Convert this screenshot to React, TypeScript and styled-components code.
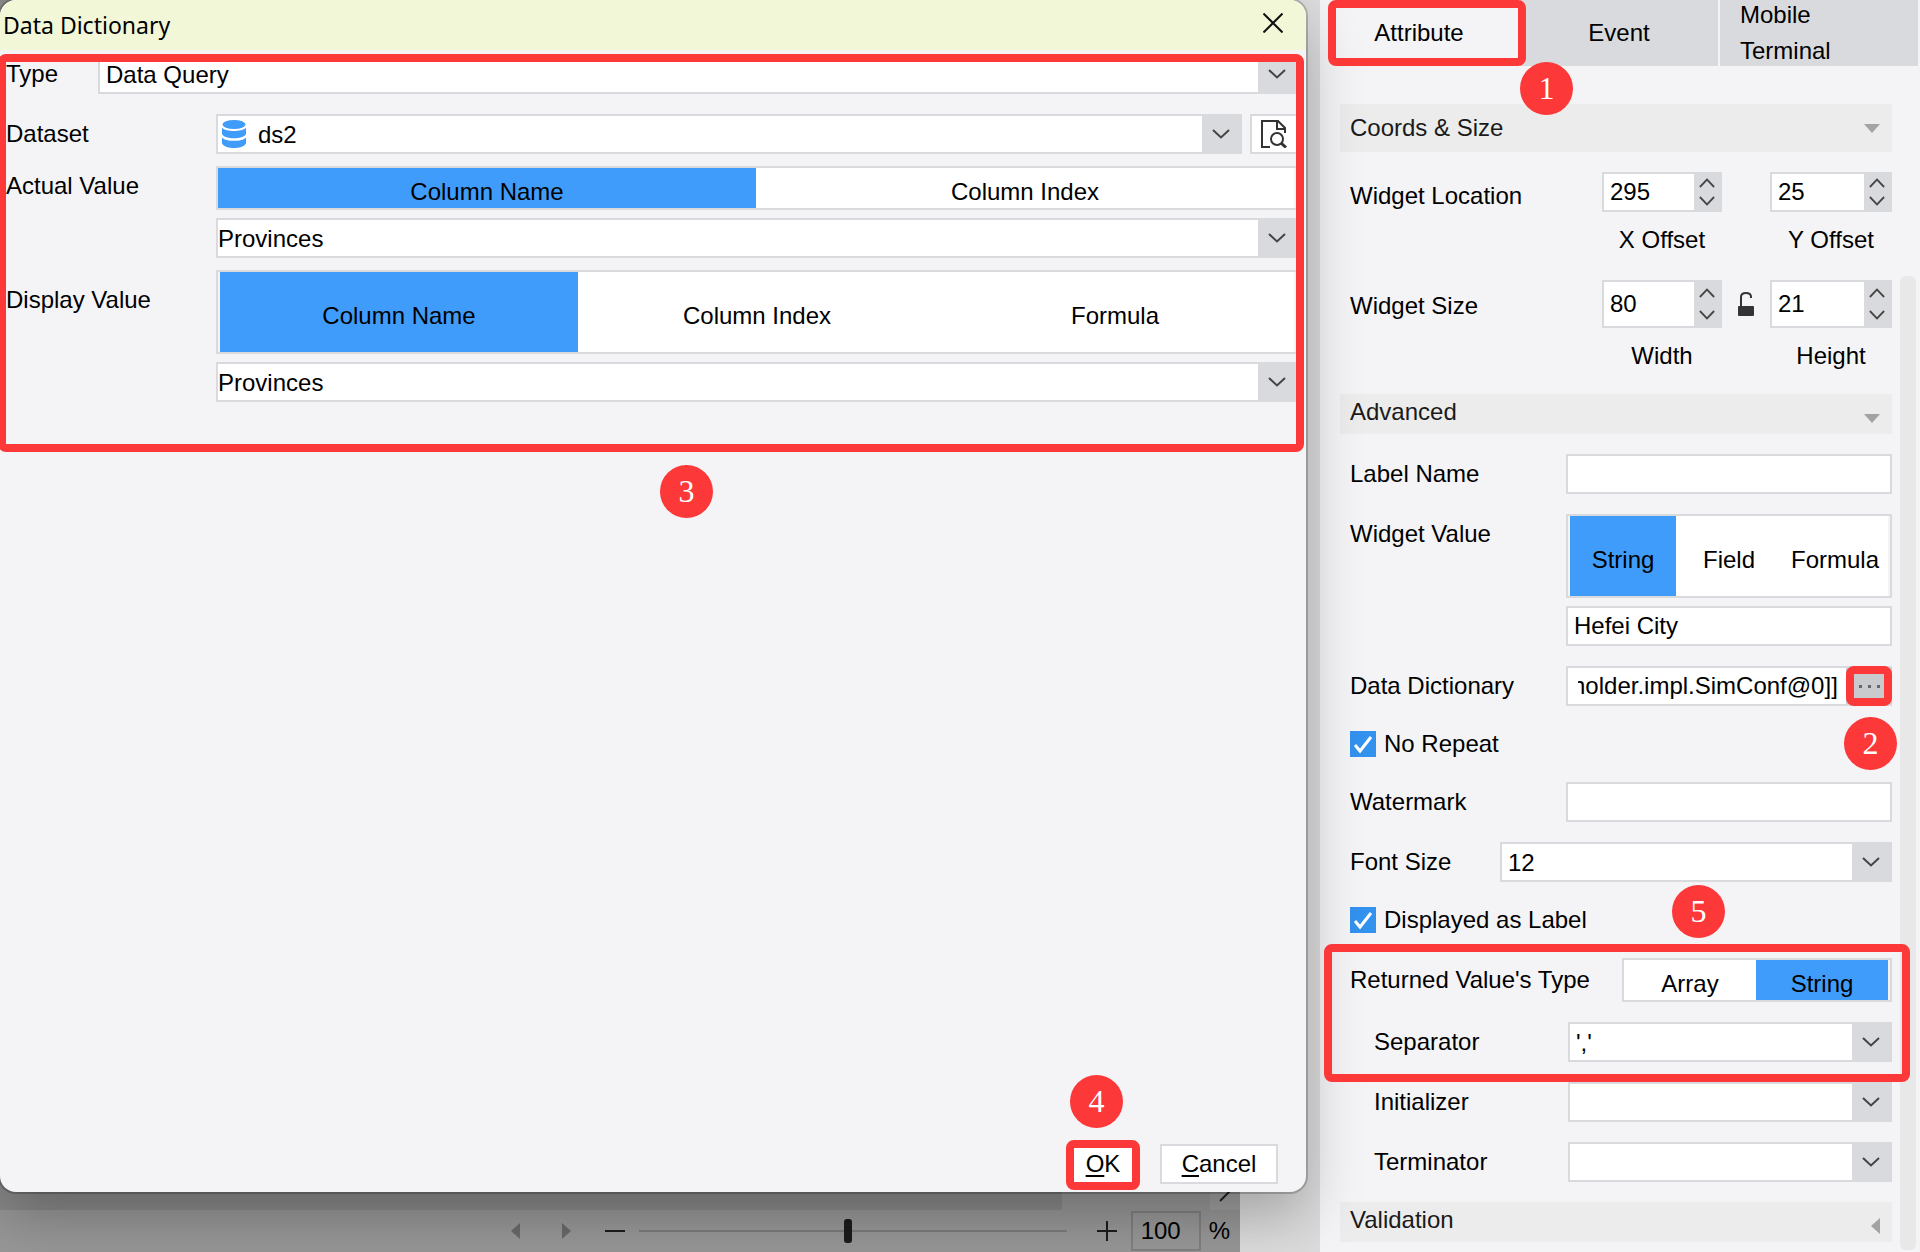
import React, { useEffect, useId, useRef, useState } from "react";
import styled, { createGlobalStyle } from "styled-components";

const line = "#d9dadd";
const surface = "#f4f4f7";
const blue = "#409cfa";
const red = "#fc3838";

const GlobalStyle = createGlobalStyle`
  *, *::before, *::after { box-sizing: border-box; }
  body { margin: 0; background: #dcdcdc; }
  body, button, input, select {
    font-family: "Liberation Sans", Arial, sans-serif;
    font-size: 24px;
    color: #000;
  }
  button { padding: 0; border: 0; background: none; cursor: pointer; }
`;

/* ---------- shell ---------- */

const Page = styled.div`
  position: relative;
  display: flex;
  min-height: 100vh;
  overflow: hidden;
`;

const Workspace = styled.main`
  flex: 1;
  display: flex;
  flex-direction: column;
  margin-right: 80px;
  background: #979797;
`;

const Canvas = styled.div`
  flex: 1;
  display: flex;
  justify-content: flex-end;
  align-items: flex-end;
  background: #898989;
`;

const CanvasEdge = styled.div`
  align-self: stretch;
  display: flex;
  justify-content: flex-end;
  align-items: flex-end;
  width: 178px;
  background: #979797;
`;

const ScrollCorner = styled.div`
  display: flex;
  justify-content: center;
  width: 30px;
  height: 20px;
  background: #9f9f9f;
`;

const StatusBar = styled.footer`
  display: flex;
  justify-content: flex-end;
  align-items: center;
  gap: 14px;
  height: 42px;
  padding-right: 10px;
`;

const PageArrows = styled.div`
  display: flex;
  gap: 42px;
  margin-right: 20px;
`;

const StatusButton = styled.button`
  display: flex;
`;

const ZoomSlider = styled.input`
  appearance: none;
  width: 428px;
  height: 24px;
  margin: 0 16px 0 0;
  background: linear-gradient(#7c7c7c, #7c7c7c) center / 100% 2px no-repeat;
  &::-webkit-slider-thumb {
    appearance: none;
    width: 8px;
    height: 24px;
    border-radius: 3px;
    background: #1c1c1c;
  }
`;

const ZoomValue = styled.input`
  width: 70px;
  height: 40px;
  padding: 0 0 0 8px;
  border: 2px solid #808080;
  background: transparent;
`;

const Percent = styled.div`
  display: flex;
  align-items: center;
  gap: 8px;
`;

/* ---------- callouts ---------- */

const Target = styled.div`
  position: relative;
  display: grid;
`;

const Highlight = styled.div<{ $inset: string }>`
  position: absolute;
  z-index: 3;
  inset: ${(p) => p.$inset};
  border: 8px solid ${red};
  border-radius: 8px;
  pointer-events: none;
`;

const Badge = styled.div<{ $left: string; $top: string }>`
  position: absolute;
  z-index: 3;
  left: ${(p) => p.$left};
  top: ${(p) => p.$top};
  width: 53px;
  height: 53px;
  border-radius: 50%;
  background: ${red};
  color: #fff;
  font-family: "Liberation Serif", "Times New Roman", serif;
  font-size: 32px;
  line-height: 53px;
  text-align: center;
`;

/* ---------- controls ---------- */

const Label = styled.label<{ $drop?: number }>`
  align-self: start;
  height: 40px;
  padding-top: ${(p) => p.$drop ?? 0}px;
  line-height: 40px;
  white-space: nowrap;
`;

const TextInput = styled.input`
  width: 100%;
  min-width: 0;
  height: 40px;
  padding: 0 6px;
  border: 2px solid ${line};
  border-radius: 0;
  background: #fff;
`;

const SelectBox = styled.div`
  display: grid;
  grid-template-columns: 1fr 38px;
  height: 40px;
  min-width: 0;
  border: 2px solid ${line};
  background: #fff;
`;

const NativeSelect = styled.select<{ $pad: number }>`
  grid-area: 1 / 1 / 2 / 3;
  appearance: none;
  min-width: 0;
  padding: 0 40px 0 ${(p) => p.$pad}px;
  border: 0;
  border-radius: 0;
  background: transparent;
`;

const SelectArrow = styled.span`
  grid-area: 1 / 2 / 2 / 3;
  display: grid;
  place-items: center;
  background: ${line};
  pointer-events: none;
`;

const SegmentBox = styled.div<{ $tall?: boolean }>`
  display: grid;
  grid-auto-flow: column;
  grid-auto-columns: 1fr;
  height: ${(p) => (p.$tall ? 84 : 44)}px;
  padding: 0 2px 0 ${(p) => (p.$tall ? 2 : 0)}px;
  border: 2px solid ${line};
  background: ${surface};
`;

const Segment = styled.button<{ $on: boolean }>`
  padding-top: 8px;
  background: ${(p) => (p.$on ? blue : "#fff")};
`;

const SpinBox = styled.div<{ $tall?: boolean }>`
  display: grid;
  grid-template-columns: 1fr 26px;
  height: ${(p) => (p.$tall ? 48 : 40)}px;
  border: 2px solid ${line};
  background: #fff;
`;

const SpinInput = styled.input`
  min-width: 0;
  width: 100%;
  padding: 0 0 0 6px;
  border: 0;
  background: transparent;
`;

const SpinButtons = styled.div`
  display: grid;
  grid-template-rows: 1fr 1fr;
  background: ${line};
`;

const SpinButton = styled.button`
  display: grid;
  place-items: center;
`;

const CheckLabel = styled.label`
  display: flex;
  align-items: center;
  gap: 8px;
  height: 36px;
`;

const CheckMark = styled.span`
  display: grid;
  width: 26px;
  height: 26px;
  place-items: center;
  input, svg { grid-area: 1 / 1; }
  svg { pointer-events: none; }
`;

const CheckInput = styled.input`
  appearance: none;
  width: 26px;
  height: 26px;
  margin: 0;
  background: #fff;
  border: 2px solid ${line};
  &:checked { background: #3392ee; border-color: #3392ee; }
`;

/* ---------- dialog ---------- */

const Dialog = styled.section`
  position: absolute;
  z-index: 2;
  left: 0;
  top: 0;
  bottom: 60px;
  width: calc(100% - 614px);
  display: flex;
  flex-direction: column;
  justify-content: space-between;
  border-radius: 16px;
  background: ${surface};
  box-shadow: 0 0 0 2px rgba(0, 0, 0, 0.2), 0 24px 56px rgba(0, 0, 0, 0.26);
`;

const TitleBar = styled.header`
  display: flex;
  justify-content: space-between;
  align-items: center;
  height: 50px;
  padding: 0 23px 0 3px;
  border-radius: 16px 16px 0 0;
  background: #f1f7d7;
`;

const Title = styled.h1`
  margin: 0;
  font-family: "Noto Sans", "Open Sans", sans-serif;
  font-size: 23px;
  font-weight: 400;
  line-height: 50px;
`;

const CloseButton = styled.button`
  display: flex;
  padding-bottom: 4px;
`;

const DialogForm = styled.form`
  position: relative;
  display: grid;
  gap: 20px;
  margin-top: 4px;
  padding: 0 8px 50px 6px;
`;

const TypeRow = styled.div`
  display: grid;
  grid-template-columns: 92px 1fr;
`;

const FieldList = styled.div`
  display: grid;
  gap: 12px;
`;

const FieldRow = styled.div`
  display: grid;
  grid-template-columns: 210px 1fr;
`;

const Stack = styled.div`
  display: grid;
  gap: 8px;
  min-width: 0;
`;

const DatasetControls = styled.div`
  display: grid;
  grid-template-columns: 1fr 48px;
  gap: 8px;
`;

const DatasetMark = styled.span`
  grid-area: 1 / 1 / 2 / 2;
  display: flex;
  align-items: center;
  padding-left: 4px;
  pointer-events: none;
`;

const PreviewButton = styled.button`
  display: grid;
  place-items: center;
  border: 2px solid ${line};
  background: #fff;
`;

const DialogActions = styled.div`
  display: flex;
  justify-content: flex-end;
  gap: 22px;
  padding: 0 28px 8px 0;
`;

const ActionButton = styled.button<{ $wide?: boolean }>`
  width: ${(p) => (p.$wide ? 118 : 70)}px;
  height: 40px;
  border: 2px solid ${line};
  background: #fff;
  u { text-underline-offset: 3px; text-decoration-thickness: 2px; text-decoration-skip-ink: none; }
`;

/* ---------- attribute panel ---------- */

const Panel = styled.aside`
  display: flex;
  flex-direction: column;
  width: 600px;
  background: ${surface};
`;

const Tabs = styled.div`
  position: relative;
  display: grid;
  grid-template-columns: repeat(3, 1fr);
  grid-template-rows: 66px;
  gap: 2px;
  padding-right: 2px;
`;

const Tab = styled.button<{ $on?: boolean; $left?: boolean }>`
  display: flex;
  align-items: center;
  justify-content: ${(p) => (p.$left ? "flex-start" : "center")};
  min-height: 0;
  padding: 0 20px;
  background: ${(p) => (p.$on ? surface : line)};
  line-height: 36px;
  text-align: left;
`;

const PanelBody = styled.div`
  flex: 1;
  display: flex;
  gap: 8px;
  padding: 38px 4px 2px 20px;
`;

const Sections = styled.div`
  flex: 1;
  min-width: 0;
`;

const ScrollTrack = styled.div`
  display: flex;
  flex-direction: column;
  width: 16px;
  padding-top: 172px;
`;

const ScrollThumb = styled.div`
  flex: 1;
  border-radius: 6px;
  background: #e8e8e8;
`;

const SectionHead = styled.button<{ $compact?: boolean }>`
  display: flex;
  justify-content: space-between;
  align-items: center;
  width: 100%;
  height: ${(p) => (p.$compact ? 40 : 48)}px;
  padding: 0 12px ${(p) => (p.$compact ? 4 : 0)}px 10px;
  background: #ececec;
  color: #1a1a1a;
  svg { margin-top: ${(p) => (p.$compact ? 12 : 0)}px; }
`;

const SectionBody = styled.div<{ $end?: number }>`
  display: grid;
  gap: 20px;
  padding: 20px 0 ${(p) => p.$end ?? 20}px 10px;
`;

const Row = styled.div<{ $label: number; $indent?: boolean }>`
  display: grid;
  grid-template-columns: ${(p) => p.$label}px 1fr;
  padding-left: ${(p) => (p.$indent ? 24 : 0)}px;
`;

const PairRow = styled.div`
  display: grid;
  grid-template-columns: 252px 120px 48px 1fr;
`;

const Caption = styled.label`
  padding-top: 8px;
  line-height: 40px;
  text-align: center;
`;

const GroupLabel = styled.span`
  line-height: 44px;
  white-space: nowrap;
`;

const LockButton = styled.button`
  display: grid;
  place-items: center;
`;

const ReturnGroup = styled.div`
  position: relative;
  display: grid;
  gap: 20px;
`;

const DictField = styled.div`
  position: relative;
  display: grid;
  grid-template-columns: 1fr 46px;
  height: 40px;
  padding-left: 10px;
  border: 2px solid ${line};
  border-right: 0;
  background: #fff;
`;

const DictInput = styled.input`
  min-width: 0;
  width: 100%;
  padding: 0;
  border: 0;
  border-right: 8px solid #fff;
  background: transparent;
`;

const MoreButton = styled.button`
  display: grid;
  place-items: center;
  background: #c9cacd;
`;

/* ---------- icons ---------- */

const Chevron = ({ up = false, size = 18 }: { up?: boolean; size?: number }) => (
  <svg width={size} height="10" viewBox="0 0 18 10" preserveAspectRatio="none" fill="none" stroke="#444" strokeWidth="2" aria-hidden>
    <path d={up ? "M1 9 9 1.5 17 9" : "M1 1 9 8.5 17 1"} />
  </svg>
);

const Triangle = ({ dir, color = "#a3a3a3" }: { dir: "down" | "left" | "right"; color?: string }) => {
  const d = { down: "M0 0H16L8 9Z", left: "M9 0V16L0 8Z", right: "M0 0V16L9 8Z" }[dir];
  const down = dir === "down";
  return (
    <svg width={down ? 16 : 9} height={down ? 9 : 16} fill={color} aria-hidden>
      <path d={d} />
    </svg>
  );
};

const CloseIcon = () => (
  <svg width="20" height="20" stroke="#111" strokeWidth="2" aria-hidden>
    <path d="M.5 .5 19.5 19.5M19.5 .5 .5 19.5" />
  </svg>
);

const DatabaseIcon = () => (
  <svg width="24" height="28" viewBox="0 0 24 28" fill={blue} aria-hidden>
    <ellipse cx="12" cy="4.5" rx="11.5" ry="4.5" />
    <path d="M0 7.5C2 10.2 7 11 12 11S22 10.2 24 7.5V14C22.5 17 17 18.3 12 18.3S1.5 17 0 14Z" />
    <path d="M0 17.5C2 20 7 20.8 12 20.8S22 20 24 17.5V23.5C22.5 26.6 17 28 12 28S1.5 26.6 0 23.5Z" />
  </svg>
);

const PreviewIcon = () => (
  <svg width="26" height="28" viewBox="0 0 26 28" fill="none" stroke="#333" strokeWidth="2" aria-hidden>
    <path d="M9 27H1V1H17L24 8V13M16 1V9H24" />
    <circle cx="16" cy="19" r="6" />
    <path d="M20 23 25 27.5" strokeWidth="3" />
  </svg>
);

const UnlockIcon = () => (
  <svg width="16" height="24" viewBox="0 0 16 24" aria-hidden>
    <path d="M3 14V5Q3 1 8 1T13 5V6" fill="none" stroke="#333" strokeWidth="2" />
    <rect y="14" width="16" height="10" rx="1" fill="#333" />
  </svg>
);

const TickIcon = () => (
  <svg width="20" height="20" viewBox="0 0 20 20" fill="none" stroke="#fff" strokeWidth="3" aria-hidden>
    <path d="M2 11 7 17 18 3" />
  </svg>
);

const DotsIcon = () => (
  <svg width="21" height="3" fill="#666" aria-hidden>
    <path d="M0 0H3V3H0ZM9 0H12V3H9ZM18 0H21V3H18Z" />
  </svg>
);

/* ---------- composed controls ---------- */

type SelectProps = { id: string; options: string[]; pad?: number; icon?: React.ReactNode };

const Select = ({ id, options, pad = 6, icon }: SelectProps) => (
  <SelectBox>
    {icon && <DatasetMark>{icon}</DatasetMark>}
    <NativeSelect id={id} $pad={pad}>
      {options.map((o) => (
        <option key={o}>{o}</option>
      ))}
    </NativeSelect>
    <SelectArrow>
      <Chevron />
    </SelectArrow>
  </SelectBox>
);

type SegmentsProps = { options: string[]; initial?: number; tall?: boolean; label: string };

const Segments = ({ options, initial = 0, tall, label }: SegmentsProps) => {
  const [active, setActive] = useState(initial);
  return (
    <SegmentBox $tall={tall} role="group" aria-label={label}>
      {options.map((o, i) => (
        <Segment key={o} type="button" $on={i === active} aria-pressed={i === active} onClick={() => setActive(i)}>
          {o}
        </Segment>
      ))}
    </SegmentBox>
  );
};

const Spinner = ({ id, initial, tall }: { id: string; initial: number; tall?: boolean }) => {
  const [value, setValue] = useState(initial);
  return (
    <SpinBox $tall={tall}>
      <SpinInput id={id} inputMode="numeric" value={value} onChange={(e) => setValue(Number(e.target.value) || 0)} />
      <SpinButtons>
        <SpinButton type="button" aria-label="Increase" onClick={() => setValue(value + 1)}>
          <Chevron up size={16} />
        </SpinButton>
        <SpinButton type="button" aria-label="Decrease" onClick={() => setValue(value - 1)}>
          <Chevron size={16} />
        </SpinButton>
      </SpinButtons>
    </SpinBox>
  );
};

const Check = ({ children }: { children: string }) => {
  const id = useId();
  return (
    <CheckLabel htmlFor={id}>
      <CheckMark>
        <CheckInput id={id} type="checkbox" defaultChecked />
        <TickIcon />
      </CheckMark>
      {children}
    </CheckLabel>
  );
};

const DictionaryField = () => {
  const ref = useRef<HTMLInputElement>(null);
  // Keep the tail of the long value in view.
  useEffect(() => {
    if (ref.current) ref.current.scrollLeft = ref.current.scrollWidth;
  }, []);
  return (
    <DictField>
      <DictInput ref={ref} id="dictionary" defaultValue="holder.impl.SimConf@0]]" />
      <MoreButton type="button" aria-label="Edit data dictionary">
        <DotsIcon />
      </MoreButton>
      <Highlight $inset="-2px 0 -2px calc(100% - 46px)" />
      <Badge $left="calc(100% - 48px)" $top="49px">2</Badge>
    </DictField>
  );
};

/* ---------- screen ---------- */

const DataDictionaryDialog = () => (
  <Dialog role="dialog" aria-labelledby="dialog-title">
    <div>
      <TitleBar>
        <Title id="dialog-title">Data Dictionary</Title>
        <CloseButton type="button" aria-label="Close">
          <CloseIcon />
        </CloseButton>
      </TitleBar>
      <DialogForm>
        <TypeRow>
          <Label htmlFor="type">Type</Label>
          <Select id="type" options={["Data Query"]} />
        </TypeRow>
        <FieldList>
          <FieldRow>
            <Label htmlFor="dataset">Dataset</Label>
            <DatasetControls>
              <Select id="dataset" options={["ds2"]} pad={40} icon={<DatabaseIcon />} />
              <PreviewButton type="button" aria-label="Preview dataset">
                <PreviewIcon />
              </PreviewButton>
            </DatasetControls>
          </FieldRow>
          <FieldRow>
            <Label htmlFor="actual">Actual Value</Label>
            <Stack>
              <Segments label="Actual value source" options={["Column Name", "Column Index"]} />
              <Select id="actual" options={["Provinces"]} pad={0} />
            </Stack>
          </FieldRow>
          <FieldRow>
            <Label htmlFor="display" $drop={10}>Display Value</Label>
            <Stack>
              <Segments label="Display value source" tall options={["Column Name", "Column Index", "Formula"]} />
              <Select id="display" options={["Provinces"]} pad={0} />
            </Stack>
          </FieldRow>
        </FieldList>
        <Highlight $inset="0 2px 0 -2px" />
        <Badge $left="calc(52% - 19px)" $top="calc(100% + 13px)">3</Badge>
      </DialogForm>
    </div>
    <DialogActions>
      <Target>
        <ActionButton type="button"><u>O</u>K</ActionButton>
        <Highlight $inset="-4px -2px -6px" />
        <Badge $left="2px" $top="-69px">4</Badge>
      </Target>
      <ActionButton type="button" $wide><u>C</u>ancel</ActionButton>
    </DialogActions>
  </Dialog>
);

const AttributePanel = () => (
  <Panel>
    <Tabs role="tablist">
      <Target>
        <Tab type="button" role="tab" aria-selected $on>Attribute</Tab>
        <Highlight $inset="0 -8px 0 8px" />
        <Badge $left="calc(100% + 2px)" $top="62px">1</Badge>
      </Target>
      <Tab type="button" role="tab">Event</Tab>
      <Tab type="button" role="tab" $left>Mobile Terminal</Tab>
    </Tabs>
    <PanelBody>
      <Sections>
        <SectionHead type="button">
          Coords &amp; Size
          <Triangle dir="down" />
        </SectionHead>
        <SectionBody $end={18}>
          <PairRow>
            <Label as="span" $drop={4}>Widget Location</Label>
            <Spinner id="x-offset" initial={295} />
            <span />
            <Spinner id="y-offset" initial={25} />
            <span />
            <Caption htmlFor="x-offset">X Offset</Caption>
            <span />
            <Caption htmlFor="y-offset">Y Offset</Caption>
          </PairRow>
          <PairRow>
            <Label as="span" $drop={6}>Widget Size</Label>
            <Spinner id="width" initial={80} tall />
            <LockButton type="button" aria-label="Lock aspect ratio">
              <UnlockIcon />
            </LockButton>
            <Spinner id="height" initial={21} tall />
            <span />
            <Caption htmlFor="width">Width</Caption>
            <span />
            <Caption htmlFor="height">Height</Caption>
          </PairRow>
        </SectionBody>

        <SectionHead type="button" $compact>
          Advanced
          <Triangle dir="down" />
        </SectionHead>
        <SectionBody>
          <Row $label={216}>
            <Label htmlFor="label-name">Label Name</Label>
            <TextInput id="label-name" />
          </Row>
          <Row $label={216}>
            <Label htmlFor="widget-value">Widget Value</Label>
            <Stack>
              <Segments label="Widget value type" tall options={["String", "Field", "Formula"]} />
              <TextInput id="widget-value" defaultValue="Hefei City" />
            </Stack>
          </Row>
          <Row $label={216}>
            <Label htmlFor="dictionary">Data Dictionary</Label>
            <DictionaryField />
          </Row>
          <Check>No Repeat</Check>
          <Row $label={216}>
            <Label htmlFor="watermark">Watermark</Label>
            <TextInput id="watermark" />
          </Row>
          <Row $label={150}>
            <Label htmlFor="font-size">Font Size</Label>
            <Select id="font-size" options={["12"]} />
          </Row>
          <Check>Displayed as Label</Check>
          <ReturnGroup>
            <Row $label={272}>
              <GroupLabel>Returned Value's Type</GroupLabel>
              <Segments label="Returned value's type" options={["Array", "String"]} initial={1} />
            </Row>
            <Row $label={194} $indent>
              <Label htmlFor="separator">Separator</Label>
              <Select id="separator" options={["','"]} />
            </Row>
            <Highlight $inset="-14px -18px -20px -26px" />
            <Badge $left="calc(100% - 220px)" $top="-73px">5</Badge>
          </ReturnGroup>
          <Row $label={194} $indent>
            <Label htmlFor="initializer">Initializer</Label>
            <Select id="initializer" options={[""]} />
          </Row>
          <Row $label={194} $indent>
            <Label htmlFor="terminator">Terminator</Label>
            <Select id="terminator" options={[""]} />
          </Row>
        </SectionBody>

        <SectionHead type="button" $compact>
          Validation
          <Triangle dir="left" />
        </SectionHead>
      </Sections>
      <ScrollTrack>
        <ScrollThumb />
      </ScrollTrack>
    </PanelBody>
  </Panel>
);

export default function App() {
  return (
    <>
      <GlobalStyle />
      <Page>
        <Workspace>
          <Canvas>
            <CanvasEdge>
              <ScrollCorner>
                <svg width="12" height="12" fill="none" stroke="#222" strokeWidth="2" aria-hidden>
                  <path d="M11 1 1 11" />
                </svg>
              </ScrollCorner>
            </CanvasEdge>
          </Canvas>
          <StatusBar>
            <PageArrows>
              <StatusButton type="button" aria-label="Previous page"><Triangle dir="left" color="#6a6a6a" /></StatusButton>
              <StatusButton type="button" aria-label="Next page"><Triangle dir="right" color="#6a6a6a" /></StatusButton>
            </PageArrows>
            <StatusButton type="button" aria-label="Zoom out">
              <svg width="20" height="20" stroke="#1c1c1c" strokeWidth="2" aria-hidden><path d="M0 10H20" /></svg>
            </StatusButton>
            <ZoomSlider type="range" min="0" max="200" defaultValue="98" aria-label="Zoom" />
            <StatusButton type="button" aria-label="Zoom in">
              <svg width="20" height="20" stroke="#1c1c1c" strokeWidth="2" aria-hidden><path d="M0 10H20M10 0V20" /></svg>
            </StatusButton>
            <Percent>
              <ZoomValue id="zoom" defaultValue="100" />
              <label htmlFor="zoom">%</label>
            </Percent>
          </StatusBar>
        </Workspace>
        <AttributePanel />
        <DataDictionaryDialog />
      </Page>
    </>
  );
}
